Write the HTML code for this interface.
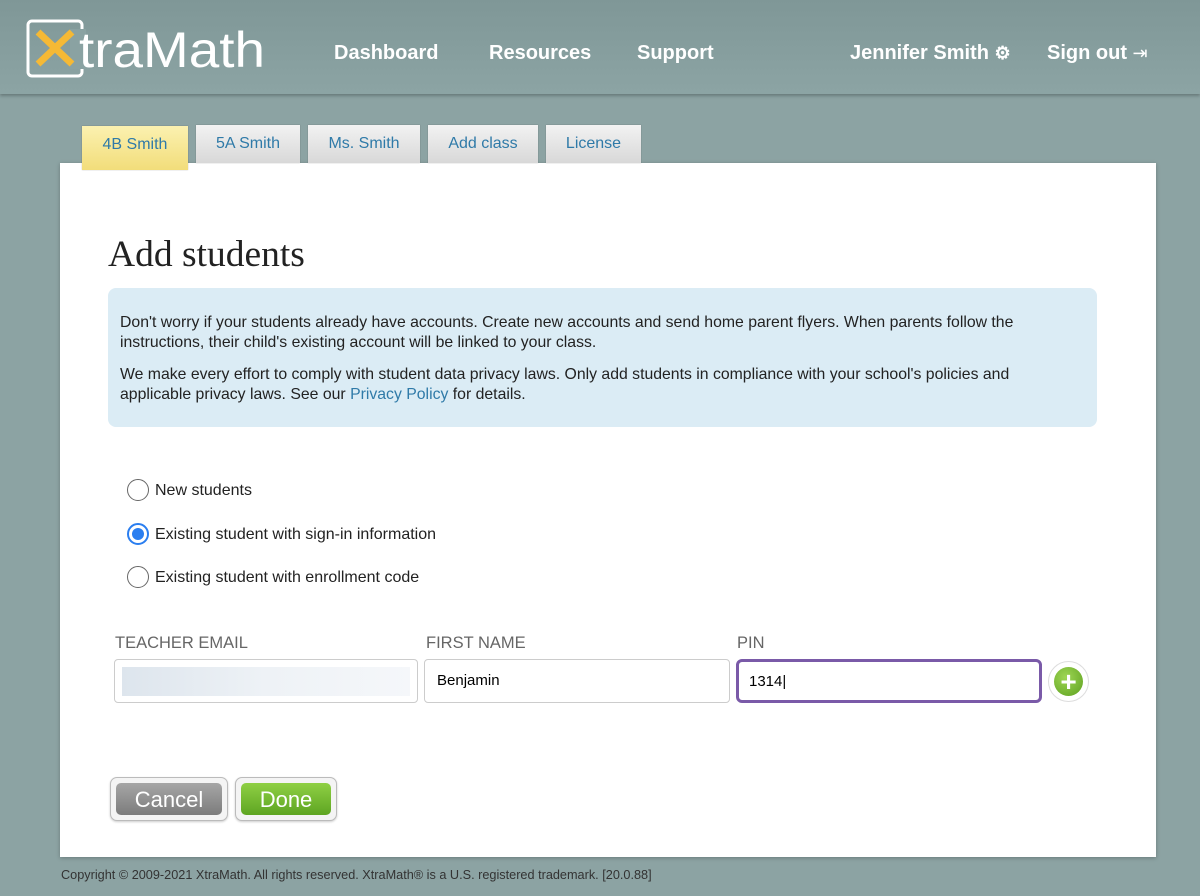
<!DOCTYPE html>
<html><head><meta charset="utf-8"><style>
body{margin:0;width:1200px;height:896px;background:#8ca3a3;font-family:"Liberation Sans",sans-serif;position:relative;overflow:hidden}
.hdr{position:absolute;left:0;top:0;width:1200px;height:94px;background:linear-gradient(#7f9797,#8ca4a4);box-shadow:0 2px 3px rgba(0,0,0,.25)}
.nav{position:absolute;top:42px;color:#fff;font-weight:bold;font-size:20px}
.tab{position:absolute;top:125px;height:38px;background:linear-gradient(#f2f2f2,#d8d8d8);color:#2f7aa8;font-size:16px;text-align:center;line-height:38px;box-shadow:0 0 1px rgba(0,0,0,.3)}
.card{position:absolute;left:60px;top:163px;width:1096px;height:694px;background:#fff;box-shadow:0 1px 4px rgba(0,0,0,.25)}
.abs{position:absolute}
.info{left:108px;top:288px;width:989px;height:139px;background:#dbecf5;border-radius:8px;font-size:15.8px;color:#222;line-height:20px;white-space:nowrap}
.radio{width:22px;height:22px;border:1px solid #666;border-radius:50%;box-sizing:border-box;background:#fff}
.lbl{font-size:16px;color:#222}
.flab{font-size:16.5px;color:#666;top:634px}
.inp{top:659px;height:44px;border:1px solid #ccc;border-radius:4px;box-sizing:border-box;background:#fff;font-size:15px;line-height:42px;padding-left:12px}
.btn{top:777px;height:44px;border:1px solid #bbb;border-radius:7px;background:#f4f4f4;box-shadow:0 1px 2px rgba(0,0,0,.2);box-sizing:border-box}
.btn div{position:absolute;left:5px;top:5px;right:5px;bottom:5px;border-radius:5px;color:#fff;font-size:22px;text-align:center;line-height:33px}
</style></head><body>
<div class="hdr"></div>
<svg class="abs" style="left:26px;top:19px" width="250" height="60">
<rect x="2" y="2" width="54" height="55" rx="4" fill="none" stroke="#fff" stroke-width="3"/>
<rect x="44" y="10" width="16" height="40" fill="#8aa2a2"/>
<path d="M12 13 L46 45 M46 13 L12 45" stroke="#f5b935" stroke-width="7"/>
<text x="53" y="48" fill="#fff" font-size="50" font-family="Liberation Sans" textLength="186" lengthAdjust="spacingAndGlyphs">traMath</text>
</svg>
<div class="nav" style="left:334px">Dashboard</div>
<div class="nav" style="left:489px">Resources</div>
<div class="nav" style="left:637px">Support</div>
<div class="nav" style="left:850px">Jennifer Smith <span style="font-size:18px">⚙</span></div>
<div class="nav" style="left:1047px">Sign out <span style="font-weight:normal;font-size:18px">⇥</span></div>
<div class="card"></div>
<div class="tab" style="left:82px;width:106px;top:126px;height:44px;background:linear-gradient(#fbf1b0,#f2dd7a)">4B Smith</div>
<div class="tab" style="left:196px;width:104px">5A Smith</div>
<div class="tab" style="left:308px;width:112px">Ms. Smith</div>
<div class="tab" style="left:428px;width:110px">Add class</div>
<div class="tab" style="left:546px;width:95px">License</div>
<div class="abs" style="left:108px;top:233px;font-family:'Liberation Serif',serif;font-size:37.5px;color:#222">Add students</div>
<div class="abs info"><div style="padding:25px 12px 0 12px">Don't worry if your students already have accounts. Create new accounts and send home parent flyers. When parents follow the<br>instructions, their child's existing account will be linked to your class.<div style="height:12px"></div>We make every effort to comply with student data privacy laws. Only add students in compliance with your school's policies and<br>applicable privacy laws. See our <span style="color:#2f7aa8">Privacy Policy</span> for details.</div></div>
<div class="abs radio" style="left:127px;top:479px"></div><div class="abs lbl" style="left:155px;top:482px">New students</div>
<div class="abs radio" style="left:127px;top:523px;border:2px solid #2a7ef0"><div style="margin:3px;width:12px;height:12px;border-radius:50%;background:#2a7ef0"></div></div><div class="abs lbl" style="left:155px;top:526px">Existing student with sign-in information</div>
<div class="abs radio" style="left:127px;top:566px"></div><div class="abs lbl" style="left:155px;top:569px">Existing student with enrollment code</div>
<div class="abs flab" style="left:115px">TEACHER EMAIL</div>
<div class="abs flab" style="left:426px">FIRST NAME</div>
<div class="abs flab" style="left:737px">PIN</div>
<div class="abs inp" style="left:114px;width:304px;padding:0"><div style="margin:7px 7px 0 7px;height:29px;background:linear-gradient(90deg,#dde5ed,#eef2f6 50%,#f5f7fa)"></div></div>
<div class="abs inp" style="left:424px;width:306px">Benjamin</div>
<div class="abs inp" style="left:736px;width:306px;border:3px solid #7a5aa8;border-radius:6px;line-height:40px;padding-left:10px">1314|</div>
<div class="abs" style="left:1048px;top:661px;width:41px;height:41px;border-radius:50%;background:#fff;border:1px solid #ddd;box-sizing:border-box"><div style="margin:5px;width:29px;height:29px;border-radius:50%;background:radial-gradient(circle at 40% 35%,#9ed654,#5da01f);color:#fff;font-size:28px;font-weight:bold;text-align:center;line-height:29px">+</div></div>
<div class="abs btn" style="left:110px;width:118px"><div style="background:linear-gradient(#a6a6a6,#7c7c7c)">Cancel</div></div>
<div class="abs btn" style="left:235px;width:102px"><div style="background:linear-gradient(#8fd044,#5ea522)">Done</div></div>
<div class="abs" style="left:61px;top:868px;font-size:12.7px;color:#333">Copyright © 2009-2021 XtraMath. All rights reserved. XtraMath® is a U.S. registered trademark. [20.0.88]</div>
</body></html>
